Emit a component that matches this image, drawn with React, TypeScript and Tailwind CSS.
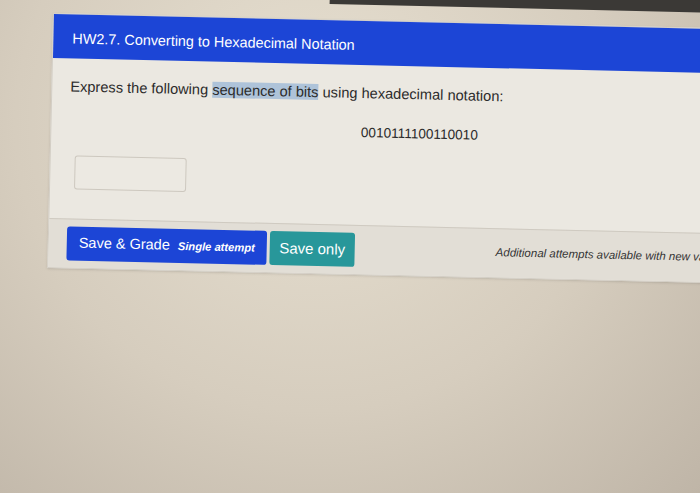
import React from 'react'

export default function App() {
  return (
    <div
      className="relative w-[700px] h-[493px] overflow-hidden bg-[radial-gradient(ellipse_at_45%_25%,#e7e0d1_0%,#d6cdbe_55%,#bfb5a7_100%)]"
      style={{ fontFamily: '"Liberation Sans", Arial, sans-serif' }}
    >
      {/* screen bezel edge, top right */}
      <div className="absolute left-[330px] -top-[14px] w-[420px] h-[18px] bg-[#3b3936] rotate-[1.3deg] origin-top-left" />

      <div className="pt-[13px] pl-[53px]">
        <div className="w-[738px] rotate-[1.3deg] origin-top-left bg-[#ebe8e1] border border-[#d3cec5] shadow-sm">
          {/* Header */}
          <div className="h-[44px] bg-[#1c45d6] flex items-center pt-[5px] pl-[19px] text-white text-[14.4px]">
            HW2.7. Converting to Hexadecimal Notation
          </div>

          {/* Question body */}
          <div className="pt-[19px] pb-[29px]">
            <p className="pl-[18px] text-[14.6px] text-[#2b2b2b] leading-[18px]">
              Express the following{' '}
              <span className="bg-[#aec3d9]">sequence of bits</span> using hexadecimal notation:
            </p>
            <p className="mt-[22px] text-center text-[13.6px] text-[#2b2b2b] leading-[18px]">
              0010111100110010
            </p>
            <div className="mt-[20px] ml-[24px] w-[112px] h-[34px] rounded-[3px] border border-[#cdc8bf] bg-[#ece9e2]" />
          </div>

          {/* Footer */}
          <div className="border-t border-[#cfcac1] bg-[#e2ded6] h-[49px] flex items-center pl-[18px]">
            <button className="h-[34px] w-[200px] rounded-[3px] bg-[#1c45d6] text-white flex items-center pl-[12px] gap-[8px]">
              <span className="text-[14.5px]">Save &amp; Grade</span>
              <span className="text-[11.2px] italic font-bold">Single attempt</span>
            </button>
            <button className="ml-[3px] h-[34px] w-[85px] rounded-[3px] bg-[#28979a] text-white text-[15px]">
              Save only
            </button>
            <span className="ml-[141px] whitespace-nowrap text-[11.5px] italic text-[#333]">
              Additional attempts available with new variants
            </span>
          </div>
        </div>
      </div>
    </div>
  )
}
